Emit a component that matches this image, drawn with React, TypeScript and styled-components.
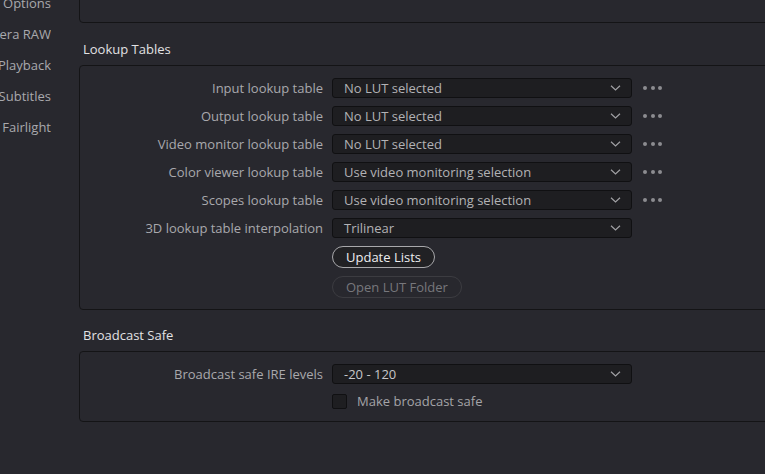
import styled, { createGlobalStyle } from "styled-components"

const GlobalStyle = createGlobalStyle`
    html, body {
        margin: 0;
        padding: 0;
        background-color: #28282e;
        overflow: hidden;
    }
    body {
        font-family: "Open Sans", "Noto Sans", sans-serif;
        font-size: 13px;
    }
`

const Page = styled.div`
    display: flex;
    height: 474px;
    overflow: hidden;
`

/*___Sidebar___*/

const Sidebar = styled.nav`
    width: 51px;
    flex-shrink: 0;
    margin-top: -12px;
    overflow: hidden;
`

const SideItem = styled.div`
    display: flex;
    justify-content: flex-end;
    height: 31px;
    line-height: 31px;
    white-space: nowrap;
    color: #a9a9ad;
`

/*___Main___*/

const Main = styled.main`
    width: 720px;
    flex-shrink: 0;
    margin-left: 28px;
    display: flex;
    flex-direction: column;
`

const Panel = styled.section<{ $height?: number; $top?: number; $bottom?: number }>`
    box-sizing: border-box;
    border: 1px solid #141416;
    border-radius: 4px;
    margin-top: ${p => p.$top ?? 0}px;
    height: ${p => (p.$height ? `${p.$height}px` : "auto")};
    padding: 12px 0 ${p => p.$bottom ?? 11}px;
`

const Heading = styled.h2<{ $top: number }>`
    margin: ${p => p.$top}px 0 6px;
    padding-left: 4px;
    font-size: 13px;
    font-weight: 400;
    line-height: 20px;
    color: #e2e2e4;
`

const Grid = styled.div`
    display: grid;
    grid-template-columns: 243px 300px auto;
    column-gap: 9px;
    row-gap: 8px;
    align-items: center;
`

const Label = styled.label`
    text-align: right;
    color: #a9a9ad;
    white-space: nowrap;
`

const Select = styled.div<{ $bright?: boolean }>`
    box-sizing: border-box;
    height: 20px;
    display: flex;
    align-items: center;
    justify-content: space-between;
    padding: 0 10px 0 11px;
    background-color: #1e1e21;
    border: 1px solid #101012;
    border-radius: 3px;
    color: ${p => (p.$bright ? "#c6c6c8" : "#b2b2b5")};
`

const More = styled.span`
    display: flex;
    gap: 3.5px;
    margin-left: 2px;

    & > i{
        width: 4px;
        height: 4px;
        border-radius: 50%;
        background-color: #8c8c90;
    }
`

const Pill = styled.button<{ $disabled?: boolean }>`
    box-sizing: border-box;
    height: 22px;
    padding: 0 13px;
    border-radius: 11px;
    border: 1px solid ${p => (p.$disabled ? "#3c3c41" : "#a8a8ab")};
    background-color: ${p => (p.$disabled ? "transparent" : "#212124")};
    color: ${p => (p.$disabled ? "#77777c" : "#ededef")};
    font-family: inherit;
    font-size: 13px;
    line-height: 20px;
    justify-self: start;
    cursor: pointer;
`

const Check = styled.label`
    display: flex;
    align-items: center;
    gap: 10px;
    height: 20px;
    margin-top: -1px;
    color: #a4a4a8;

    & > span{
        box-sizing: border-box;
        width: 15px;
        height: 15px;
        border: 1px solid #101012;
        border-radius: 2px;
        background-color: #1e1e21;
    }
`

const Chevron = () => (
    <svg width="11" height="6" viewBox="0 0 11 6" fill="none">
        <path d="M1 0.8 L5.5 5 L10 0.8" stroke="#a0a0a4" strokeWidth="1.2" />
    </svg>
)

const Dots = () => (
    <More>
        <i />
        <i />
        <i />
    </More>
)

const lutRows = [
    { label: "Input lookup table", value: "No LUT selected", more: true },
    { label: "Output lookup table", value: "No LUT selected", more: true },
    { label: "Video monitor lookup table", value: "No LUT selected", more: true },
    { label: "Color viewer lookup table", value: "Use video monitoring selection", more: true },
    { label: "Scopes lookup table", value: "Use video monitoring selection", more: true },
    { label: "3D lookup table interpolation", value: "Trilinear", more: false },
]

const sideItems = ["General Options", "Camera RAW", "Capture and Playback", "Subtitles", "Fairlight"]

export default function App() {
    return (
        <Page>
            <GlobalStyle />
            <Sidebar>
                {sideItems.map(item => (
                    <SideItem key={item}>{item}</SideItem>
                ))}
            </Sidebar>
            <Main>
                <Panel $top={-20} $height={43} />

                <Heading $top={16}>Lookup Tables</Heading>
                <Panel>
                    <Grid>
                        {lutRows.map(row => (
                            <>
                                <Label key={row.label}>{row.label}</Label>
                                <Select>
                                    {row.value}
                                    <Chevron />
                                </Select>
                                {row.more ? <Dots /> : <span />}
                            </>
                        ))}
                        <span />
                        <Pill>Update Lists</Pill>
                        <span />
                        <span />
                        <Pill $disabled>Open LUT Folder</Pill>
                        <span />
                    </Grid>
                </Panel>

                <Heading $top={15}>Broadcast Safe</Heading>
                <Panel $bottom={10}>
                    <Grid>
                        <Label>Broadcast safe IRE levels</Label>
                        <Select $bright>
                            -20 - 120
                            <Chevron />
                        </Select>
                        <span />
                        <span />
                        <Check>
                            <span />
                            Make broadcast safe
                        </Check>
                        <span />
                    </Grid>
                </Panel>
            </Main>
        </Page>
    )
}
